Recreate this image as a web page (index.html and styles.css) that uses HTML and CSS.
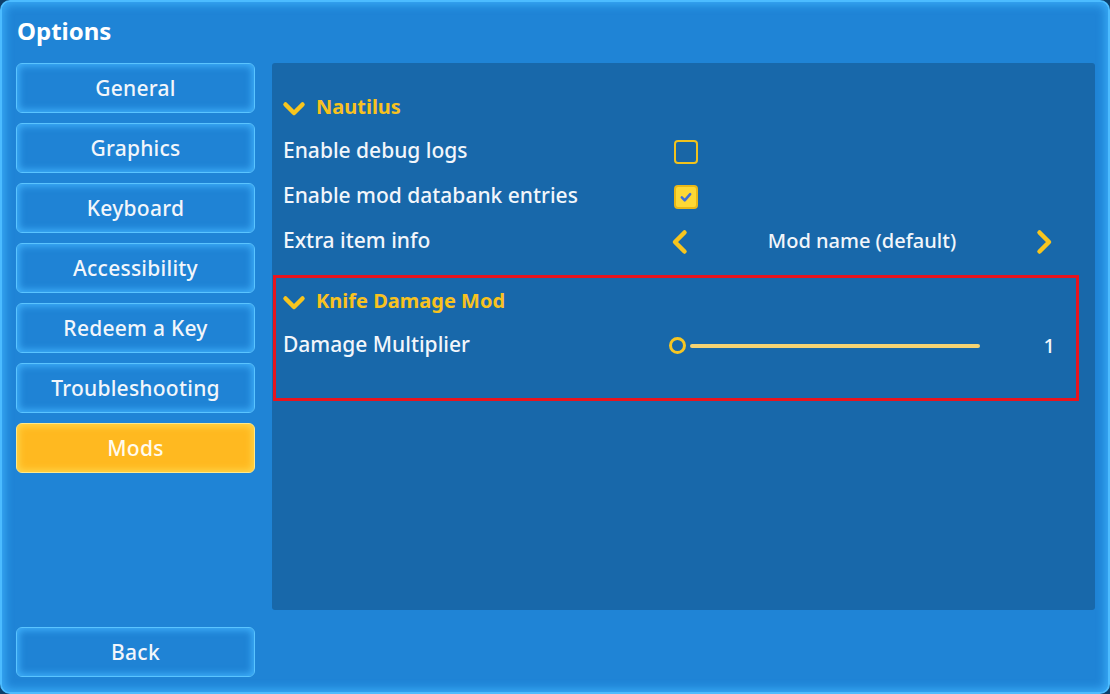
FILE: index.html
```html
<!DOCTYPE html>
<html>
<head>
<meta charset="utf-8">
<link rel="stylesheet" href="styles.css">
</head>
<body>
<div class="window">
  <h1 class="title">Options</h1>
  <div class="main">
    <nav class="sidebar">
      <div class="btn">General</div>
      <div class="btn">Graphics</div>
      <div class="btn">Keyboard</div>
      <div class="btn">Accessibility</div>
      <div class="btn">Redeem a Key</div>
      <div class="btn">Troubleshooting</div>
      <div class="btn active">Mods</div>
      <div class="btn back">Back</div>
    </nav>
    <section class="panel">
      <div class="section">
        <div class="row header">
          <svg class="chev" viewBox="0 0 24 16" width="24" height="16"><path d="M3.5 3.5 L12 12 L20.5 3.5" fill="none" stroke="#f7c51e" stroke-width="4.5" stroke-linecap="round" stroke-linejoin="round"/></svg>
          <span>Nautilus</span>
        </div>
        <div class="row">
          <span class="label">Enable debug logs</span>
          <div class="control"><span class="check"></span></div>
        </div>
        <div class="row">
          <span class="label">Enable mod databank entries</span>
          <div class="control"><span class="check on"><svg viewBox="0 0 24 24" width="20" height="20"><path d="M7 12.5 L10.5 16 L17 8.5" fill="none" stroke="#3f6fd6" stroke-width="3" stroke-linecap="round" stroke-linejoin="round"/></svg></span></div>
        </div>
        <div class="row">
          <span class="label">Extra item info</span>
          <div class="control choice">
            <svg class="arrow" viewBox="0 0 20 26" width="20" height="26"><path d="M14.5 3.5 L5 13 L14.5 22.5" fill="none" stroke="#f7c51e" stroke-width="4.5" stroke-linecap="round" stroke-linejoin="round"/></svg>
            <span class="choice-text">Mod name (default)</span>
            <svg class="arrow" viewBox="0 0 20 26" width="20" height="26"><path d="M5.5 3.5 L15 13 L5.5 22.5" fill="none" stroke="#f7c51e" stroke-width="4.5" stroke-linecap="round" stroke-linejoin="round"/></svg>
          </div>
        </div>
      </div>
      <div class="section highlight">
        <div class="row header">
          <svg class="chev" viewBox="0 0 24 16" width="24" height="16"><path d="M3.5 3.5 L12 12 L20.5 3.5" fill="none" stroke="#f7c51e" stroke-width="4.5" stroke-linecap="round" stroke-linejoin="round"/></svg>
          <span>Knife Damage Mod</span>
        </div>
        <div class="row">
          <span class="label">Damage Multiplier</span>
          <div class="control slider">
            <span class="knob"></span>
            <span class="track"></span>
            <span class="value">1</span>
          </div>
        </div>
      </div>
    </section>
  </div>
</div>
</body>
</html>
```

FILE: styles.css
```css
* { box-sizing: border-box; }
html, body { margin: 0; padding: 0; background: #0d3f6a; }
body {
  font-family: "Noto Sans", "Open Sans", sans-serif;
  color: #f2f6fb;
  width: 1110px;
  height: 694px;
  overflow: hidden;
}
.window {
  width: 1110px;
  height: 694px;
  background: #1f84d6;
  border: 2px solid #4cbcff;
  border-radius: 10px;
  box-shadow: inset 0 0 9px 3px #38a9f5;
  display: flex;
  flex-direction: column;
  padding: 0 13px 15px 14px;
}
.title {
  margin: 0;
  height: 61px;
  font-size: 24px;
  font-weight: 700;
  color: #ffffff;
  line-height: 58px;
  padding-left: 1px;
}
.main {
  flex: 1;
  display: flex;
  gap: 17px;
}
.sidebar {
  width: 239px;
  display: flex;
  flex-direction: column;
  gap: 10px;
}
.btn {
  height: 50px;
  border: 1px solid #5ac4ff;
  border-radius: 6px;
  background: #1f83d5;
  box-shadow: inset 0 0 7px 2px #3fb0fb;
  display: flex;
  align-items: center;
  justify-content: center;
  font-size: 21px;
  font-weight: 500;
  letter-spacing: 0.25px;
  color: #f2f6fb;
  padding-bottom: 1px;
}
.btn.active {
  background: #ffb920;
  border-color: #ffe98a;
  box-shadow: inset 0 0 7px 2px #ffd64a;
  color: #fffbee;
}
.btn.back { margin-top: auto; }
.panel {
  flex: 1;
  background: #1868aa;
  border-radius: 3px;
  height: 547px;
  padding: 21px 39px 0 11px;
  display: flex;
  flex-direction: column;
}
.row {
  height: 45px;
  display: flex;
  align-items: center;
  font-size: 20px;
}
.label {
  flex: 1;
  font-size: 21px;
  font-weight: 500;
  padding-bottom: 3px;
}
.header {
  color: #f8c21f;
  font-weight: 700;
  gap: 10px;
}
.header .chev { margin-left: -1px; margin-top: 4px; }
.control {
  width: 386px;
  display: flex;
  align-items: center;
}
.check {
  width: 24px;
  height: 24px;
  margin-left: 4px;
  border: 2px solid #f1c21c;
  border-radius: 4px;
  background: #1966a6;
  display: flex;
  align-items: center;
  justify-content: center;
}
.check.on { background: #fdd835; border-color: #e9b817; }
.choice { justify-content: space-between; padding-right: 2px; }
.choice-text { flex: 1; text-align: center; font-weight: 500; padding-bottom: 2px; }
.arrow { display: block; }
.highlight {
  margin: 11px -23px 0 -10px;
  border: 3px solid #e8141e;
  padding: 0 20px 30px 7px;
}
.knob {
  width: 17px;
  height: 17px;
  border: 3px solid #f6c623;
  border-radius: 50%;
  background: #1868aa;
  margin-left: -1px;
}
.track {
  width: 290px;
  height: 4px;
  margin-left: 4px;
  border-radius: 2px;
  background: #f5d373;
}
.value { flex: 1; text-align: right; padding-right: 1px; font-weight: 500; }
```
